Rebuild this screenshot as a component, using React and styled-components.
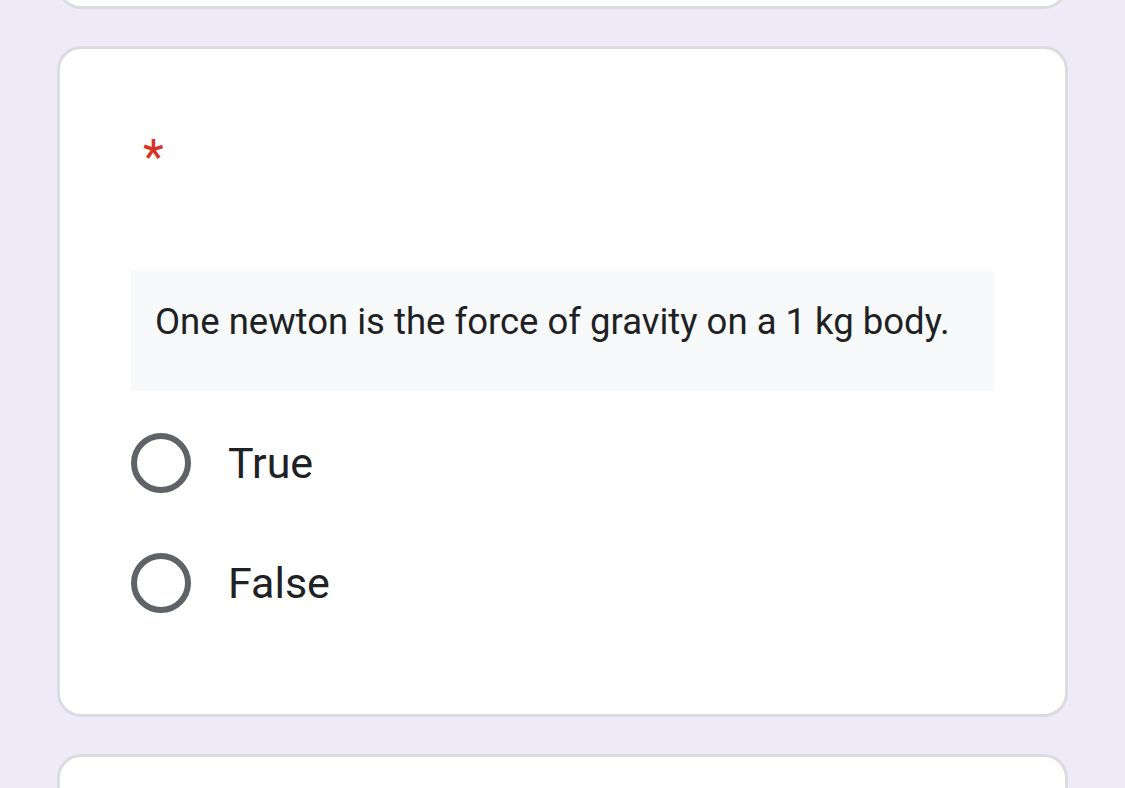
import styled, { createGlobalStyle } from "styled-components";

const GlobalStyle = createGlobalStyle`
  html, body {
    margin: 0;
    padding: 0;
    background: #eeeaf8;
  }
  body {
    font-family: Roboto, "Liberation Sans", Arial, sans-serif;
  }
`;

const Page = styled.main`
  height: 788px;
  overflow: hidden;
  padding: 0 57px;
  display: flex;
  flex-direction: column;
  gap: 37px;
`;

const Card = styled.section`
  flex-shrink: 0;
  background: #fff;
  border: 3px solid #dadce0;
  border-radius: 24px;
  box-sizing: border-box;
  padding: ${(p) => (p.$empty ? "0" : "72px 71px 71px")};
  height: ${(p) => p.$height || "auto"};
  margin-top: ${(p) => p.$pullUp || "0"};
`;

const Title = styled.div`
  height: 72px;
  line-height: 72px;
  font-size: 48px;
  color: #202124;
`;

const Required = styled.span`
  color: #d93025;
  padding-left: 12px;
`;

// the statement is set in a grey panel, like an embedded picture of text
const Statement = styled.div`
  margin-top: 78px;
  height: 120px;
  box-sizing: border-box;
  background: #f8f9fa;
  padding: 29px 24px 0;
  font-size: 36.5px;
  line-height: normal;
  color: #202124;
`;

const Options = styled.div`
  margin-top: 12px;
  display: flex;
  flex-direction: column;
`;

const Option = styled.label`
  height: 120px;
  display: flex;
  align-items: center;
  gap: 37px;
  cursor: pointer;
`;

const Radio = styled.span`
  width: 60px;
  height: 60px;
  border: 6px solid #5f6368;
  border-radius: 50%;
  box-sizing: border-box;
  flex-shrink: 0;
`;

const OptionText = styled.span`
  font-size: 43px;
  color: #202124;
`;

const choices = ["True", "False"];

const App = () => {
  return (
    <>
      <GlobalStyle />
      <Page>
        <Card $empty $height="209px" $pullUp="-200px" />
        <Card>
          <Title>
            <Required>*</Required>
          </Title>
          <Statement>One newton is the force of gravity on a 1 kg body.</Statement>
          <Options>
            {choices.map((c) => (
              <Option key={c}>
                <Radio />
                <OptionText>{c}</OptionText>
              </Option>
            ))}
          </Options>
        </Card>
        <Card $empty $height="200px" />
      </Page>
    </>
  );
};

export default App;
